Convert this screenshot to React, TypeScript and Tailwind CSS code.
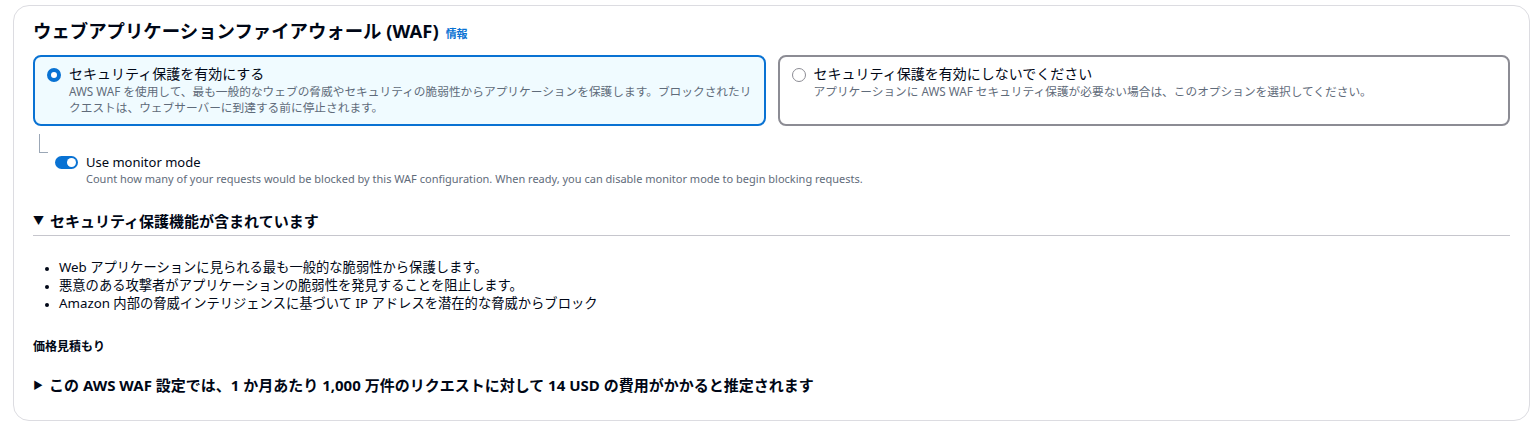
import React from "react";

const font = { fontFamily: '"Noto Sans", "Noto Sans CJK JP", sans-serif' };

function Radio({ checked }: { checked: boolean }) {
  return checked ? (
    <span className="mt-[3px] h-[14px] w-[14px] shrink-0 rounded-full border-[4px] border-[#0972d3] bg-white" />
  ) : (
    <span className="mt-[3px] h-[14px] w-[14px] shrink-0 rounded-full border-[1.5px] border-[#8c8c94] bg-white" />
  );
}

function Tile({
  checked,
  label,
  desc,
}: {
  checked: boolean;
  label: string;
  desc: string;
}) {
  return (
    <div
      className={`flex h-[71px] gap-2 rounded-[8px] border-2 pl-[12px] pr-[8px] pt-[8px] ${
        checked ? "border-[#0972d3] bg-[#f0fbff]" : "border-[#8c8c94] bg-white"
      }`}
    >
      <Radio checked={checked} />
      <div className="min-w-0">
        <div className="text-[14px] leading-[18px] text-[#000716]">{label}</div>
        <div className="text-[11.7px] leading-[16px] text-[#5f6b7a]">{desc}</div>
      </div>
    </div>
  );
}

export default function App() {
  const bullets = [
    "Web アプリケーションに見られる最も一般的な脆弱性から保護します。",
    "悪意のある攻撃者がアプリケーションの脆弱性を発見することを阻止します。",
    "Amazon 内部の脅威インテリジェンスに基づいて IP アドレスを潜在的な脅威からブロック",
  ];

  return (
    <div className="min-h-[427px] bg-white pl-[13px] pr-[6px] pt-[5px]" style={font}>
      <div className="h-[416px] rounded-[16px] border border-[#dcdce1] px-[19px] pt-[13px]">
        <div className="flex items-baseline gap-[7px]">
          <h2 className="text-[18.4px] font-bold leading-[24px] text-[#000716]">
            ウェブアプリケーションファイアウォール (WAF)
          </h2>
          <span className="text-[11px] font-bold text-[#0972d3]">情報</span>
        </div>

        <div className="mt-[12px] grid grid-cols-2 gap-[12px]">
          <Tile
            checked
            label="セキュリティ保護を有効にする"
            desc="AWS WAF を使用して、最も一般的なウェブの脅威やセキュリティの脆弱性からアプリケーションを保護します。ブロックされたリクエストは、ウェブサーバーに到達する前に停止されます。"
          />
          <Tile
            checked={false}
            label="セキュリティ保護を有効にしないでください"
            desc="アプリケーションに AWS WAF セキュリティ保護が必要ない場合は、このオプションを選択してください。"
          />
        </div>

        <div className="ml-[6px] mt-[8px] h-[19px] w-[9px] border-b border-l border-[#9ba7b6]" />

        <div className="ml-[22px] mt-[1px] flex gap-[8px]">
          <span className="mt-[2px] flex h-[13px] w-[23px] shrink-0 items-center justify-end rounded-full bg-[#0972d3] pr-[2px]">
            <span className="h-[9px] w-[9px] rounded-full bg-white" />
          </span>
          <div>
            <div className="text-[13px] leading-[17px] text-[#000716]">Use monitor mode</div>
            <div className="text-[11px] leading-[16px] text-[#5f6b7a]">
              Count how many of your requests would be blocked by this WAF configuration. When ready, you can disable monitor mode to begin blocking requests.
            </div>
          </div>
        </div>

        <div className="mt-[24px] border-b border-[#c6c6cd] pb-[4px]">
          <div className="flex items-center gap-[6px] text-[15px] font-bold leading-[20px] text-[#000716]">
            <span className="text-[11px]">▼</span>
            <span>セキュリティ保護機能が含まれています</span>
          </div>
        </div>

        <ul className="mt-[22px] list-disc pl-[26px] text-[13.3px] leading-[18px] text-[#000716] marker:text-[10px]">
          {bullets.map((b) => (
            <li key={b}>{b}</li>
          ))}
        </ul>

        <div className="mt-[27px] text-[12px] font-bold leading-[16px] text-[#000716]">価格見積もり</div>

        <div className="mt-[20px] flex items-center gap-[6px] text-[15px] font-bold leading-[20px] text-[#000716]">
          <span className="text-[10px]">▶</span>
          <span>この AWS WAF 設定では、1 か月あたり 1,000 万件のリクエストに対して 14 USD の費用がかかると推定されます</span>
        </div>
      </div>
    </div>
  );
}
